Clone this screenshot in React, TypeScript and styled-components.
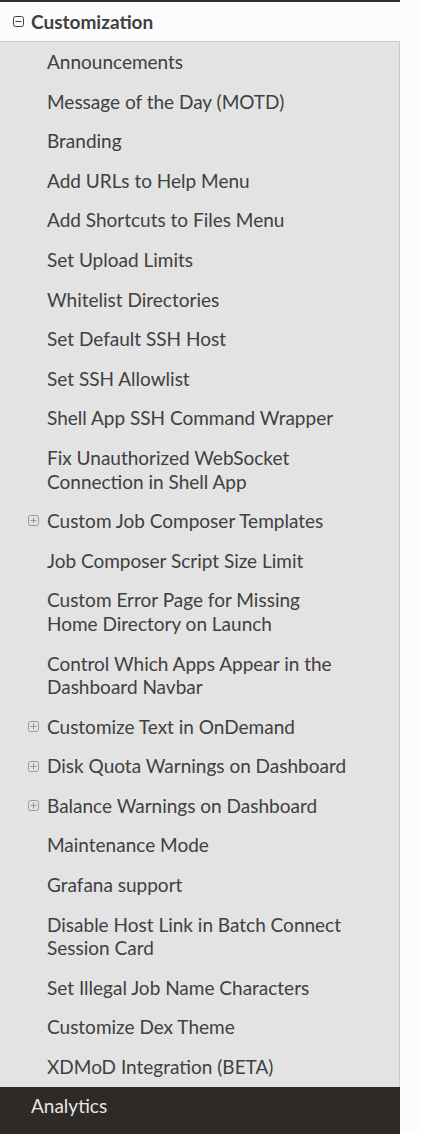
import React from "react";
import styled, { createGlobalStyle } from "styled-components";

const GlobalStyle = createGlobalStyle`
  html, body { margin: 0; padding: 0; background: #fcfcfc; }
  body { font-family: Lato, "Open Sans", "Liberation Sans", sans-serif; -webkit-font-smoothing: antialiased; }
  * { box-sizing: border-box; }
`;

const Sidebar = styled.nav`
  width: 400px;
  min-height: 1134px;
  display: flex;
  flex-direction: column;
  background: #2e2a28;
`;

const Header = styled.div`
  display: flex;
  align-items: center;
  gap: 7px;
  height: 41px;
  padding: 0 0 1px 13px;
  background: #fcfcfc;
  border-top: 2px solid #343131;
  color: #404040;
  font-weight: 700;
  font-size: 19px;
`;

const SubList = styled.ul`
  list-style: none;
  margin: 0;
  padding: 0;
  background: #e3e3e3;
  border-top: 1px solid #c9c9c9;
  border-right: 1px solid #c9c9c9;
`;

const Item = styled.li`
  display: flex;
  align-items: flex-start;
  padding: 8px 49px 8px 28px;
  color: #404040;
  font-size: 19px;
  line-height: 23.6px;
`;

const IconSlot = styled.span`
  flex: 0 0 19px;
  display: flex;
  align-items: center;
  height: 23.6px;
`;

const Label = styled.span`
  flex: 1;
`;

const Analytics = styled.div`
  padding: 7px 0 8px 31px;
  line-height: 23.6px;
  font-size: 19px;
  color: #e6e6e6;
  background: #2e2a28;
`;

const Box = ({ minus, color }: { minus?: boolean; color: string }) => (
  <svg width="11" height="11" viewBox="0 0 11 11">
    <rect x="0.5" y="0.5" width="10" height="10" rx="2" fill="none" stroke={color} strokeWidth="1" />
    <line x1="2.5" y1="5.5" x2="8.5" y2="5.5" stroke={color} strokeWidth="1" />
    {!minus && <line x1="5.5" y1="2.5" x2="5.5" y2="8.5" stroke={color} strokeWidth="1" />}
  </svg>
);

const items: { label: string; expand?: boolean }[] = [
  { label: "Announcements" },
  { label: "Message of the Day (MOTD)" },
  { label: "Branding" },
  { label: "Add URLs to Help Menu" },
  { label: "Add Shortcuts to Files Menu" },
  { label: "Set Upload Limits" },
  { label: "Whitelist Directories" },
  { label: "Set Default SSH Host" },
  { label: "Set SSH Allowlist" },
  { label: "Shell App SSH Command Wrapper" },
  { label: "Fix Unauthorized WebSocket Connection in Shell App" },
  { label: "Custom Job Composer Templates", expand: true },
  { label: "Job Composer Script Size Limit" },
  { label: "Custom Error Page for Missing Home Directory on Launch" },
  { label: "Control Which Apps Appear in the Dashboard Navbar" },
  { label: "Customize Text in OnDemand", expand: true },
  { label: "Disk Quota Warnings on Dashboard", expand: true },
  { label: "Balance Warnings on Dashboard", expand: true },
  { label: "Maintenance Mode" },
  { label: "Grafana support" },
  { label: "Disable Host Link in Batch Connect Session Card" },
  { label: "Set Illegal Job Name Characters" },
  { label: "Customize Dex Theme" },
  { label: "XDMoD Integration (BETA)" },
];

export default function App() {
  return (
    <>
      <GlobalStyle />
      <Sidebar>
        <Header>
          <Box minus color="#404040" />
          <span>Customization</span>
        </Header>
        <SubList>
          {items.map((it) => (
            <Item key={it.label}>
              <IconSlot>{it.expand && <Box color="#9a9a9a" />}</IconSlot>
              <Label>{it.label}</Label>
            </Item>
          ))}
        </SubList>
        <Analytics>Analytics</Analytics>
      </Sidebar>
    </>
  );
}
